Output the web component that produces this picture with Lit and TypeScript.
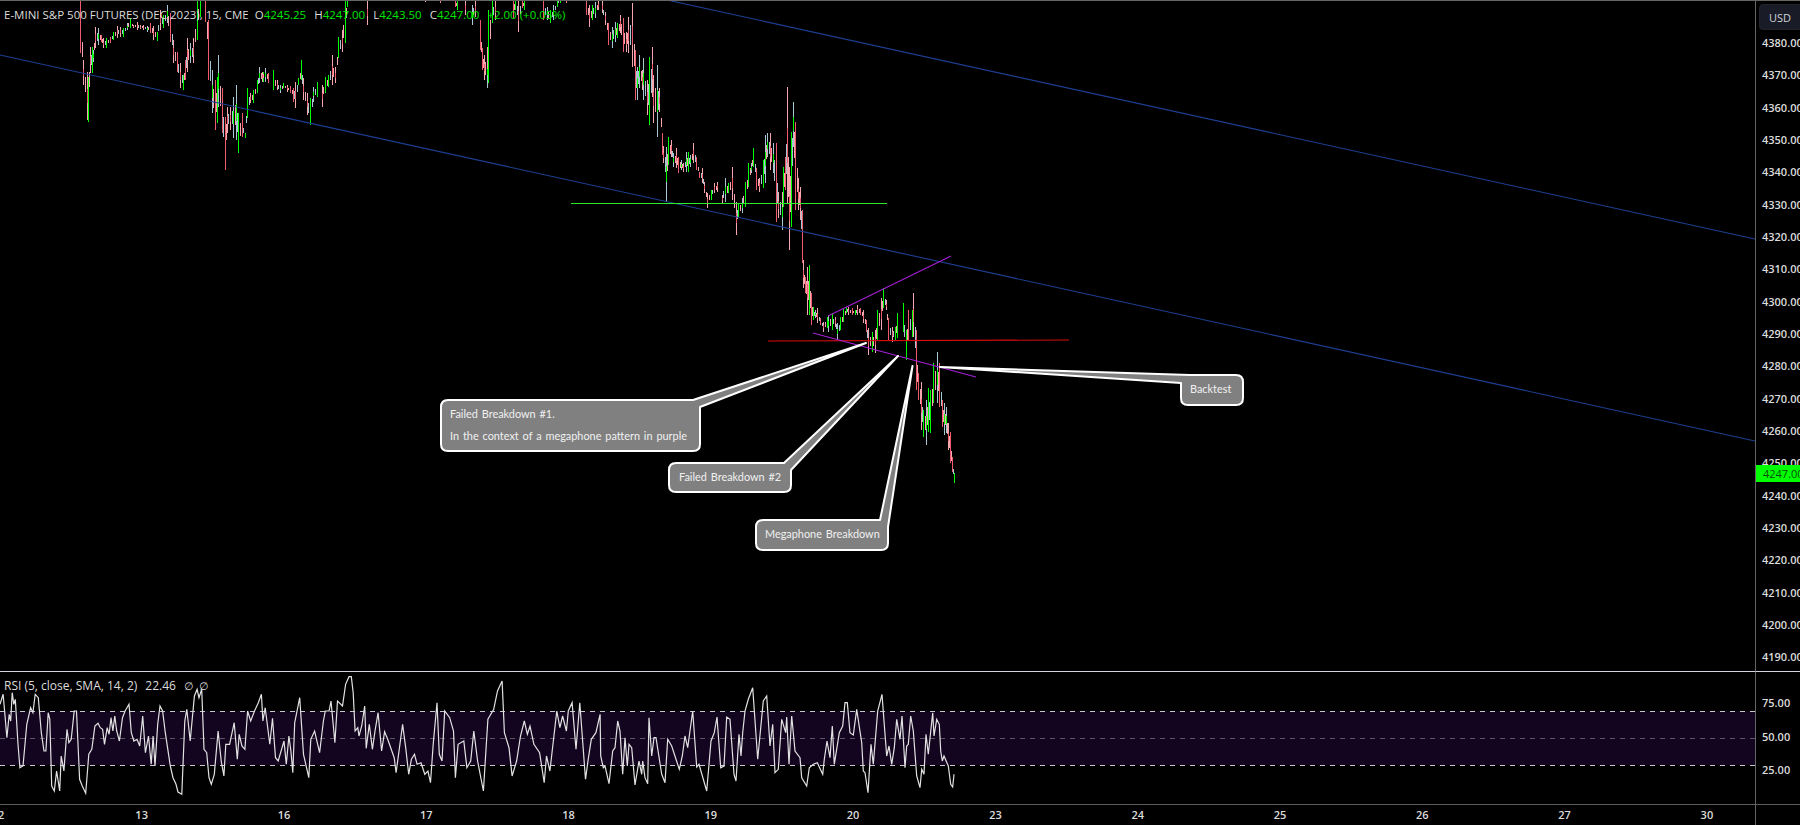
import { LitElement, css, html, svg } from 'lit';
import { customElement } from 'lit/decorators.js';

// candle data read off the chart: [x, top, bottom, kind?] in 3x crop units
type Raw = [number, number, number, string?];

const SECTIONS: { x0: number; y0: number; bars: Raw[] }[] = [
  { x0: 70, y0: 0, bars: [
    [30,0,160,'r'],[40,180,255,'p'],[50,215,360,'p'],[55,230,365,'g'],[60,140,220],[65,140,220,'g'],[70,150,185],[75,80,145,'p'],[85,85,135],[92,105,125],
    [100,115,145],[108,115,145,'g'],[120,110,130],[130,95,120,'g'],[140,78,115,'p'],[150,80,110],[160,85,110,'g'],[170,70,90],[180,55,85,'g'],[190,75,85],
    [200,65,90],[210,75,88],[220,75,90],[230,78,95],[240,70,100],[250,78,120,'p'],[260,95,122,'g'],[270,30,90],[280,45,85,'g'],[290,15,70,'b'],
    [300,40,125,'r'],[310,120,190,'p'],[320,155,215],[330,190,265,'p'],[340,225,270,'g'],[345,180,240],[350,115,215],[360,130,190,'b'],[370,115,190,'p'],[380,0,120,'g'],
    [390,0,50,'g'],[405,0,65,'r'],[415,60,240,'r'],[425,210,340],[435,240,390,'r'],[440,230,370,'g'],[445,165,320,'b'],[455,265,400,'r'],[465,350,510,'r'],[470,320,400,'p'],
    [480,320,390,'p'],[490,290,415,'b'],[497,255,420,'b'],[505,340,460,'g'],[515,340,410,'r'],[525,400,415,'g'],[532,265,355,'g'],[540,280,310,'p'],[550,270,310,'g'],[560,240,280,'g'],
    [568,200,250,'b'],[580,215,245,'g'],
  ] },
  { x0: 260, y0: 0, bars: [
    [5,215,245,'p'],[15,205,245],[25,220,250,'r'],[40,210,270,'g'],[50,240,270],[60,255,280],[70,250,265,'g'],[80,255,275],[90,258,280],[100,265,305,'r'],
    [105,245,325,'p'],[115,235,255,'g'],[122,180,240,'g'],[130,235,300,'p'],[140,280,345,'p'],[150,295,375,'g'],[160,260,305,'b'],[170,245,290,'g'],[185,255,320,'p'],[195,230,280,'g'],
    [205,225,260,'g'],[215,165,255,'p'],[225,200,250,'p'],[235,110,175,'g'],[245,90,155,'p'],[255,0,130,'g'],[262,0,20,'g'],[320,0,75,'p'],[495,0,5,'p'],[540,0,8,'p'],
    [585,0,20,'r'],[590,0,30,'g'],[615,0,45,'p'],[635,15,75,'b'],[645,0,50,'p'],[660,60,150,'r'],[665,145,210,'r'],[672,165,240,'p'],[680,150,265,'b'],[685,30,250,'g'],
    [695,0,70,'g'],[705,0,60,'p'],
  ] },
  { x0: 500, y0: 0, bars: [
    [40,0,55,'r'],[45,0,30,'g'],[55,0,95,'p'],[65,0,25,'r'],[72,0,30,'g'],[130,0,60,'r'],[140,20,60,'b'],[150,30,70,'g'],[160,15,60,'b'],[170,0,20,'g'],
    [180,0,8,'g'],[198,0,10,'p'],[235,0,3,'p'],[258,0,45,'r'],[268,15,80,'p'],[275,15,60,'g'],[285,5,55,'b'],[295,0,30],
  ] },
  { x0: 600, y0: 0, bars: [
    [5,0,40,'p'],[15,35,75],[25,70,135,'r'],[35,80,145,'b'],[45,65,125,'b'],[52,70,115,'g'],[60,45,100,'p'],[68,55,155,'r'],[78,95,155,'p'],[85,50,160,'p'],
    [97,10,200,'p'],[105,150,300,'r'],[110,200,300,'b'],[118,165,265,'b'],[125,210,270],[130,175,300,'b'],[140,240,345,'p'],[148,170,375,'g'],[155,140,290,'p'],[160,225,370,'p'],
    [170,195,410,'b'],[178,265,335,'p'],[185,400,465,'r'],[190,440,490,'p'],[198,440,605,'b'],[205,410,495,'g'],[212,420,470],[220,460,500,'b'],[228,445,505,'p'],[235,470,520],
    [242,480,510,'b'],[250,490,515,'p'],[258,455,515,'b'],[265,455,515,'g'],[270,465,500],[280,430,490,'p'],[288,470,510,'r'],[298,515,535,'r'],[305,505,550],[312,545,580,'p'],
    [322,580,625,'p'],[332,570,600,'g'],[342,550,580],[352,545,575,'p'],[365,585,610,'p'],[375,535,605,'b'],[385,550,580,'g'],[395,500,600,'p'],[407,605,705,'p'],[415,610,650,'g'],
    [425,595,640,'b'],[435,545,620,'g'],[445,490,560,'g'],[452,490,520,'b'],[460,445,500,'g'],[468,505,570,'r'],[478,535,575,'p'],[488,480,565,'g'],[495,405,550,'b'],[502,400,470,'b'],
    [510,400,510,'p'],[518,430,520,'b'],[527,430,665,'r'],[535,575,655,'p'],[545,580,690,'b'],[548,500,620,'g'],[555,470,570,'r'],[562,260,610,'p'],[568,500,750,'p'],[572,395,680,'g'],
    [578,305,440,'b'],[585,365,630,'r'],[595,535,630,'p'],[601,560,660,'p'],[605,630,790,'r'],
  ] },
  { x0: 760, y0: 260, bars: [
    [128,0,85,'p'],[135,50,100,'r'],[142,20,165,'p'],[148,15,165,'g'],[152,100,195,'r'],[158,140,180,'g'],[165,150,175,'b'],[172,145,190,'p'],[180,175,195,'r'],[190,185,215,'p'],
    [200,170,205,'g'],[205,165,215,'b'],[215,160,210,'g'],[225,170,200,'p'],[232,190,240,'b'],[240,170,210,'g'],[250,145,185,'g'],[258,140,160,'g'],[265,140,165,'p'],[275,145,165,'r'],
    [285,150,165,'g'],[292,135,165,'p'],[300,145,165,'r'],[310,150,190,'p'],[318,180,215,'r'],[325,205,285,'p'],[335,215,275,'g'],[345,210,280,'p'],[352,150,240,'g'],[362,115,210,'p'],
    [370,85,145,'g'],[378,120,150,'p'],[385,175,240,'r'],[395,200,245,'p'],[405,200,240,'g'],[412,160,235,'g'],[428,130,215,'g'],[438,210,300,'g'],[445,150,240,'r'],[455,150,230,'g'],
    [460,100,230,'p'],[468,210,390,'r'],[475,340,420,'r'],[482,365,510,'p'],[490,450,530,'g'],[497,420,555,'b'],[503,385,515,'g'],[510,390,520,'g'],[520,310,430,'g'],[530,275,430,'b'],
    [538,310,440,'r'],[545,420,500,'r'],[552,430,525,'b'],[558,440,520,'b'],[565,490,570,'p'],[570,515,610,'r'],[577,590,635,'r'],[583,640,670,'g'],
  ] },
];

// RSI trace, two crops with different horizontal scale
const RSI_A: number[][] = [
  [0,130],[8,100],[12,150],[18,230],[24,160],[28,180],[32,95],[36,130],[40,115],[47,250],[52,320],[60,315],[70,190],[80,140],[86,155],[92,100],[100,110],[108,215],[115,270],[120,270],
  [126,155],[130,175],[135,375],[142,390],[148,330],[156,390],[160,285],[167,330],[175,205],[180,245],[186,235],[194,150],[200,150],[208,355],[215,375],[224,397],[232,280],[240,265],[248,195],[256,187],
  [262,200],[268,205],[273,250],[280,200],[285,220],[290,170],[295,210],[300,165],[305,210],[312,240],[320,170],[327,150],[337,130],[343,215],[350,240],[358,235],[365,255],[373,165],[380,275],[388,225],
  [395,310],[400,225],[405,315],[412,190],[418,135],[425,150],[432,215],[445,315],[452,350],[460,370],[465,393],[475,400],[483,180],[488,145],[497,240],[508,105],[515,85],[520,110],[527,85],[533,265],
  [540,275],[546,350],[552,370],[560,340],[570,210],[578,300],[585,345],[590,250],[600,250],[612,185],[620,295],[625,220],[632,255],[640,265],[647,150],[655,180],[665,150],[675,125],[683,100],[687,180],
  [693,140],[705,250],[712,172],[720,290],[727,300],[742,240],[748,310],[755,225],[760,270],[765,335],[770,185],[783,110],[793,280],[807,350],[812,235],[822,210],[835,275],[845,180],[850,150],[860,150],
  [865,120],[875,245],[882,120],[895,135],[903,70],[912,47],[918,47],[923,95],[928,210],[935,200],[938,225],[945,195],[953,135],[957,262],[965,190],[973,265],[980,210],[988,155],[997,270],[1005,212],
  [1013,235],[1030,290],[1035,335],[1052,190],[1060,260],[1068,340],[1075,295],[1083,280],[1090,310],[1100,305],[1110,340],[1118,330],[1125,365],[1132,250],[1142,125],[1148,280],[1155,300],[1162,150],[1175,170],[1185,210],
  [1190,350],[1197,250],[1212,240],[1220,320],[1230,300],[1238,210],[1248,300],[1263,390],[1275,175],[1290,145],[1300,90],[1312,60],[1318,215],[1330,260],[1338,345],[1350,300],[1360,225],[1370,180],[1378,220],[1385,195],
  [1395,250],[1410,275],[1422,365],[1428,285],[1437,330],[1455,150],[1463,200],[1470,165],[1480,210],[1485,150],[1495,125],[1505,265],[1515,125],[1530,355],[1537,295],[1545,235],[1557,215],[1568,160],
];
const RSI_B: number[][] = [
  [2,285],[10,320],[15,315],[27,368],[38,270],[45,260],[53,180],[60,210],[68,340],[75,230],[82,315],[87,250],[95,260],[105,372],[117,300],[125,340],[128,300],[135,350],[143,368],[147,170],
  [155,285],[162,230],[168,230],[185,340],[195,365],[203,235],[215,255],[228,295],[238,325],[247,285],[255,225],[263,260],[278,150],[290,318],[297,310],[320,390],[333,240],[343,215],[351,168],[362,320],
  [372,315],[380,168],[390,175],[402,340],[408,360],[417,220],[423,285],[428,215],[435,150],[445,115],[458,80],[473,295],[490,120],[500,105],[510,255],[518,190],[525,335],[535,325],[545,175],[557,215],
  [560,168],[567,310],[575,165],[585,270],[600,290],[605,350],[620,375],[628,320],[640,310],[652,305],[668,340],[673,295],[681,240],[690,290],[697,195],[703,310],[718,215],[728,195],[735,125],[742,125],
  [750,215],[760,222],[770,145],[785,245],[790,330],[795,335],[804,395],[813,250],[820,310],[833,150],[846,100],[852,180],[860,285],[867,255],[875,310],[883,260],[890,175],[900,235],[906,165],[915,320],
  [920,255],[925,250],[932,165],[940,210],[950,345],[960,380],[965,325],[972,340],[978,220],[985,280],[998,155],[1002,225],[1010,175],[1018,190],[1022,270],[1027,300],[1032,285],[1045,315],[1052,370],[1058,378],[1062,340],
];

const rsiPoints = [
  ...RSI_A.map(([x, y]) => `${(x / 2.613).toFixed(1)},${(y / 3 - 11).toFixed(1)}`),
  ...RSI_B.map(([x, y]) => `${(600 + x / 3).toFixed(1)},${(y / 3 - 11).toFixed(1)}`),
].join(' ');

const WICK: Record<string, string> = { r: '#ef5a6c', p: '#f5a6ae', g: '#00ff00', b: '#a9c6d3' };
const BODY: Record<string, string> = { r: '#ef5a6c', p: '#ef5a6c', g: '#00ff00', b: '#00ff00' };

interface Bar { x: number; top: number; bottom: number; kind: string; filler?: boolean; }

function buildBars(): Bar[] {
  const out: Bar[] = [];
  let seed = 7;
  const next = () => (seed = (seed * 31 + 11) % 101);
  for (const section of SECTIONS) {
    section.bars.forEach((raw, i) => {
      const x = section.x0 + raw[0] / 3;
      const top = section.y0 + raw[1] / 3;
      const bottom = section.y0 + raw[2] / 3;
      out.push({ x, top, bottom, kind: raw[3] ?? 'prpb'[next() % 4] });
      // filler bar between two read ones, the real chart is denser
      const nb = section.bars[i + 1];
      if (nb && nb[0] - raw[0] <= 12) {
        const t2 = section.y0 + nb[1] / 3;
        const b2 = section.y0 + nb[2] / 3;
        const mt = (top + t2) / 2;
        const mb = (bottom + b2) / 2;
        const pad = (mb - mt) * 0.3;
        out.push({ x: x + (nb[0] - raw[0]) / 6, top: mt + pad, bottom: mb - pad, kind: 'pbp'[next() % 3], filler: true });
      }
    });
  }
  return out;
}

const BARS = buildBars();

interface Callout {
  box: [number, number, number, number]; // left, top, right, bottom (outer)
  a: [number, number];
  tip: [number, number];
  b: [number, number];
  corner: 'tr' | 'tl';
  lines: string[];
  textX: number;
  textY: number;
}

const CALLOUTS: Callout[] = [
  { box: [440, 399, 701, 452], a: [693, 400], tip: [866, 343], b: [700, 407], corner: 'tr', textX: 450, textY: 406, lines: ['Failed Breakdown #1.', 'In the context of a megaphone pattern in purple'] },
  { box: [668, 462, 792, 493], a: [784, 463], tip: [898, 356], b: [791, 470], corner: 'tr', textX: 679, textY: 469, lines: ['Failed Breakdown #2'] },
  { box: [755, 519, 889, 551], a: [880, 520], tip: [912.5, 366], b: [888, 527], corner: 'tr', textX: 765, textY: 526, lines: ['Megaphone Breakdown'] },
  { box: [1180, 374, 1244, 406], a: [1190, 375], tip: [940, 367], b: [1181, 383], corner: 'tl', textX: 1190, textY: 381, lines: ['Backtest'] },
];

function calloutPath(c: Callout): string {
  const l = c.box[0] + 1;
  const t = c.box[1] + 1;
  const r = c.box[2] - 1;
  const b = c.box[3] - 1;
  const q = 7;
  const wedge = `L${c.a[0]} ${t} L${c.tip[0]} ${c.tip[1]} L`;
  if (c.corner === 'tr') {
    return `M${l + q} ${t} ${wedge}${r} ${c.b[1]} L${r} ${b - q} Q${r} ${b} ${r - q} ${b} L${l + q} ${b} Q${l} ${b} ${l} ${b - q} L${l} ${t + q} Q${l} ${t} ${l + q} ${t} Z`;
  }
  return `M${c.a[0]} ${t} L${c.tip[0]} ${c.tip[1]} L${l} ${c.b[1]} L${l} ${b - q} Q${l} ${b} ${l + q} ${b} L${r - q} ${b} Q${r} ${b} ${r} ${b - q} L${r} ${t + q} Q${r} ${t} ${r - q} ${t} Z`;
}

const PRICES = Array.from({ length: 20 }, (_, i) => (4380 - i * 10).toFixed(2));
const DATES = ['13', '16', '17', '18', '19', '20', '23', '24', '25', '26', '27', '30'];

@customElement('app-root')
export class AppRoot extends LitElement {
  static styles = css`
    :host {
      display: block;
      width: 1800px;
      height: 825px;
      overflow: hidden;
      background: #000;
      color: #dcdcdc;
      font-family: 'Open Sans', 'Liberation Sans', sans-serif;
      font-size: 11px;
    }
    .frame {
      display: grid;
      grid-template-columns: 1755px 45px;
      grid-template-rows: 671px 133px 20px;
      border-top: 1px solid #666;
      box-sizing: border-box;
      height: 825px;
    }
    .pane {
      position: relative;
      overflow: hidden;
    }
    .pane svg {
      display: block;
    }
    .main {
      border-bottom: 1px solid #d6d2e4;
    }
    .rsi {
      border-bottom: 1px solid #5e5e5e;
    }
    .scale {
      position: relative;
      border-left: 1px solid #666;
      box-sizing: border-box;
      white-space: nowrap;
      font-weight: 600;
      overflow: hidden;
    }
    .legend {
      position: absolute;
      left: 4px;
      display: flex;
      align-items: center;
      line-height: 14px;
      white-space: nowrap;
    }
    .head {
      top: 7px;
      font-size: 11.5px;
    }
    .rsi-head {
      top: 7px;
      font-size: 12px;
    }
    .head b {
      font-weight: 400;
    }
    .symbol {
      margin-right: 6px;
    }
    .pair {
      margin-right: 8px;
    }
    .up {
      color: #00e600;
    }
    .rsi-head span {
      margin-right: 8px;
    }
    .rsi-head .empty-set {
      margin-right: 6px;
      font-family: 'DejaVu Sans', sans-serif;
      font-size: 10.5px;
    }
    .usd {
      box-sizing: border-box;
      width: 50px;
      height: 26px;
      margin: 3px 0 -3.2px 3px;
      padding-left: 9px;
      line-height: 25px;
      border-radius: 4px;
      background: #191c26;
      border: 1px solid #20232e;
      color: #cfd3dc;
      font-weight: 500;
    }
    .tick {
      height: 32.35px;
      line-height: 32.35px;
      padding-left: 6px;
    }
    .rsi-scale {
      padding-top: 14.3px;
    }
    .rsi-scale .tick {
      height: 33.5px;
      line-height: 33.5px;
    }
    .last {
      position: absolute;
      left: 0;
      top: 464px;
      width: 45px;
      height: 17px;
      line-height: 17px;
      padding-left: 7px;
      background: #00ff00;
      color: #0a4d0a;
      font-weight: 500;
    }
    .note {
      position: absolute;
      color: #f0f0f0;
      font-family: 'Lato', 'Open Sans', sans-serif;
      font-size: 10.9px;
      word-spacing: 1.1px;
      white-space: nowrap;
      line-height: 15px;
    }
    .note div + div {
      margin-top: 7px;
    }
    .band {
      position: absolute;
      left: 0;
      right: 0;
      top: 39px;
      height: 54px;
      background: #13041f;
    }
    .times {
      display: flex;
      font-weight: 600;
      line-height: 20px;
      overflow: hidden;
    }
    .times span {
      flex: 0 0 142.3px;
      text-align: center;
    }
    .times .cut {
      flex-basis: 70.5px;
      text-align: left;
      text-indent: -2px;
    }
  `;

  render() {
    return html`
      <div class="frame">
        <div class="pane main">
          <svg width="1755" height="670" viewBox="0 1 1755 670">
            ${BARS.map((b) => this.renderBar(b))}
            <line x1="0" y1="55" x2="1755" y2="441" stroke="#1d3f93" stroke-width="1.1"></line>
            <line x1="667" y1="0" x2="1755" y2="239" stroke="#1d3f93" stroke-width="1.1"></line>
            <line x1="571" y1="203.5" x2="887" y2="203.5" stroke="#2aea2a"></line>
            <line x1="768" y1="341" x2="1069" y2="340" stroke="#d80c0c" stroke-width="1.1"></line>
            <line x1="828" y1="316" x2="951" y2="256" stroke="#a61fd6" stroke-width="1.1"></line>
            <line x1="813" y1="333" x2="976" y2="377" stroke="#a61fd6" stroke-width="1.1"></line>
            ${CALLOUTS.map((c) => svg`<path d=${calloutPath(c)} fill="#808080" stroke="#fff" stroke-width="2" stroke-linejoin="round"></path>`)}
          </svg>
          ${CALLOUTS.map(
            (c) => html`<div class="note" style="left:${c.textX}px;top:${c.textY - 1}px">
              ${c.lines.map((l) => html`<div>${l}</div>`)}
            </div>`,
          )}
          <div class="legend head">
            <span class="symbol">E-MINI S&amp;P 500 FUTURES (DEC 2023), 15, CME</span>
            <span class="pair"><b>O</b><span class="up">4245.25</span></span>
            <span class="pair"><b>H</b><span class="up">4247.00</span></span>
            <span class="pair"><b>L</b><span class="up">4243.50</span></span>
            <span class="pair"><b>C</b><span class="up">4247.00</span></span>
            <span class="up">+2.00 (+0.05%)</span>
          </div>
        </div>
        <div class="scale main">
          <div class="usd">USD</div>
          ${PRICES.map((p) => html`<div class="tick">${p}</div>`)}
          <div class="last">4247.00</div>
        </div>
        <div class="pane rsi">
          <div class="band"></div>
          <svg style="position:relative" width="1755" height="132" viewBox="0 0 1755 132">
            <line x1="0" y1="39.5" x2="1755" y2="39.5" stroke="#c9c6cc" stroke-dasharray="5 5"></line>
            <line x1="0" y1="66.5" x2="1755" y2="66.5" stroke="#5d5566" stroke-dasharray="5 5"></line>
            <line x1="0" y1="93.5" x2="1755" y2="93.5" stroke="#c9c6cc" stroke-dasharray="5 5"></line>
            <polyline points=${rsiPoints} fill="none" stroke="#e2e2e2" stroke-width="1.2"></polyline>
          </svg>
          <div class="legend rsi-head">
            <span>RSI (5, close, SMA, 14, 2)</span>
            <span>22.46</span>
            <span class="empty-set">∅</span>
            <span class="empty-set">∅</span>
          </div>
        </div>
        <div class="scale rsi rsi-scale">
          <div class="tick">75.00</div>
          <div class="tick">50.00</div>
          <div class="tick">25.00</div>
        </div>
        <div class="times">
          <span class="cut">2</span>
          ${DATES.map((d) => html`<span>${d}</span>`)}
        </div>
        <div class="scale"></div>
      </div>
    `;
  }

  renderBar(b: Bar) {
    const x = Math.round(b.x) + 0.5;
    const h = b.bottom - b.top;
    const inset = b.kind === 'p' || b.kind === 'b' ? 0.35 : 0.15;
    return svg`
      <line x1=${x} x2=${x} y1=${b.top} y2=${b.bottom} stroke=${WICK[b.kind]} shape-rendering="crispEdges"></line>
      ${b.filler
        ? null
        : svg`<line x1=${x} x2=${x} y1=${b.top + h * inset} y2=${b.bottom - h * inset} stroke=${BODY[b.kind]} shape-rendering="crispEdges"></line>`}
    `;
  }
}
